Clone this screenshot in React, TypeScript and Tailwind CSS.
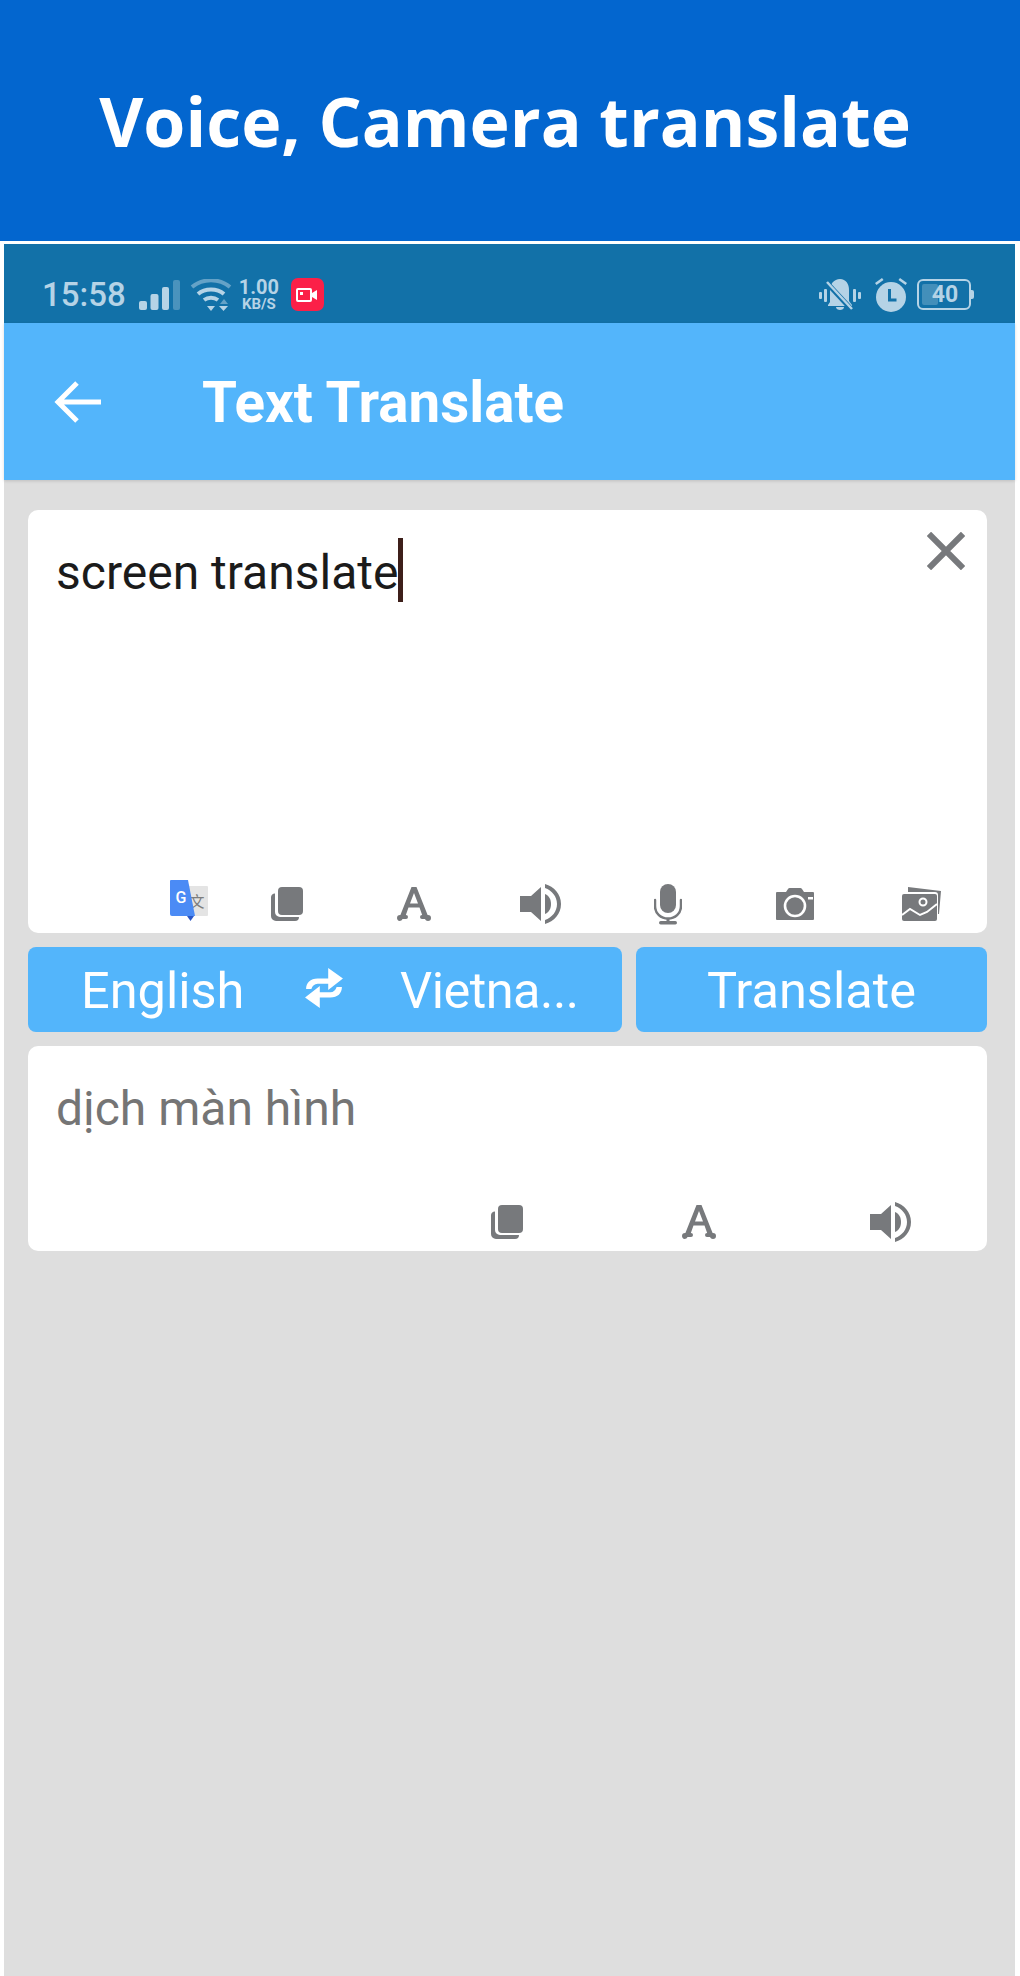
const roboto = { fontFamily: "Roboto, sans-serif" };

function CopyIcon() {
  return (
    <svg viewBox="0 0 32 34" className="w-[32px] h-[34px]" fill="#77797c">
      <path d="M11 0h17a4 4 0 0 1 4 4v20a4 4 0 0 1-4 4H11a4 4 0 0 1-4-4V4a4 4 0 0 1 4-4z" />
      <path d="M0 11a4 4 0 0 1 4-4.500V25a5 5 0 0 0 5 5h19a4 4 0 0 1-4 4H5a5 5 0 0 1-5-5z" />
    </svg>
  );
}

function FontIcon() {
  return (
    <svg viewBox="0 0 36 34" className="w-[36px] h-[34px]" fill="#77797c">
      <path d="M15.500 0h5L32 29h-5.500l-3-8.500h-11l-3 8.500H4zM14 16.500h8L18 6z" />
      <path d="M1 31a3 3 0 0 1 3-3h6a2 2 0 0 1 0 4H6.500C6 33 5 34 3.500 34 2 34 1 32.500 1 31z" />
      <path d="M26 28h6a3 3 0 0 1 0 6c-1.500 0-2.500-1-3-2h-3a2 2 0 0 1 0-4z" />
    </svg>
  );
}

function SpeakerIcon() {
  return (
    <svg viewBox="0 0 44 42" className="w-[44px] h-[42px]" fill="#77797c">
      <path d="M1 13h11L22 4v34L12 29H1z" />
      <path d="M26 11c4.500 2 6 6 6 10s-1.500 8-6 10z" />
      <path d="M26 1c9 2.500 16 10 16 20s-7 17.500-16 20v-4c7-2.500 12-8.500 12-16S33 7.500 26 5z" />
    </svg>
  );
}

function MicIcon() {
  return (
    <svg viewBox="0 0 28 42" className="w-[28px] h-[42px]" fill="#77797c">
      <rect x="6" y="1" width="16" height="29" rx="8" />
      <path d="M1 17v6c0 7.500 6 12.500 13 12.500S27 30.500 27 23v-6" fill="none" stroke="#77797c" strokeWidth="2.500" strokeLinecap="round" />
      <rect x="12.500" y="35" width="3" height="4" />
      <rect x="5" y="38" width="18" height="3.500" rx="1.700" />
    </svg>
  );
}

function CameraIcon() {
  return (
    <svg viewBox="0 0 40 34" className="w-[40px] h-[34px]">
      <path d="M1 6a1 1 0 0 1 1-1h9l2-3a2 2 0 0 1 2-1h10a2 2 0 0 1 2 1l2 3h9a1 1 0 0 1 1 1v26a1 1 0 0 1-1 1H2a1 1 0 0 1-1-1z" fill="#77797c" />
      <circle cx="20" cy="19" r="10" fill="none" stroke="#fff" strokeWidth="2.600" />
      <rect x="33" y="10" width="5" height="2.500" fill="#fff" />
    </svg>
  );
}

function GalleryIcon() {
  return (
    <svg viewBox="0 0 42 36" className="w-[42px] h-[36px]">
      <path d="M7 1l33 4-2 23-1 0V9a3 3 0 0 0-3-3H7z" fill="#77797c" />
      <rect x="1" y="8" width="35" height="27" rx="2" fill="#77797c" />
      <circle cx="22" cy="16" r="3.500" fill="none" stroke="#fff" strokeWidth="2" />
      <path d="M1 29l8-6 10 6 7-3 10-8" fill="none" stroke="#fff" strokeWidth="2" />
    </svg>
  );
}

function GoogleTranslateIcon() {
  return (
    <svg viewBox="0 0 40 42" className="w-[40px] h-[42px] mb-[8px]">
      <rect x="14" y="7" width="25" height="30" rx="1" fill="#e4e4e4" />
      <text x="28" y="28" fontSize="15" textAnchor="middle" fill="#7d7d7d" fontFamily="Noto Sans CJK SC, sans-serif">文</text>
      <path d="M2 1h17l7 36H3a2 2 0 0 1-2-2V2a1 1 0 0 1 1-1z" fill="#4b8bf5" />
      <path d="M18 37h7l-3.500 5z" fill="#2a56c6" />
      <text x="12" y="24" fontSize="16" fontWeight="500" textAnchor="middle" fill="#fff" fontFamily="Roboto, sans-serif">G</text>
    </svg>
  );
}

function SwapIcon() {
  return (
    <svg viewBox="2 0 36 38" className="w-[38px] h-[40px] mb-[4px]" fill="#fff">
      <path d="M24 0l14 10-14 11v-6H14c-3 0-5 2-6 5H3c0-6 4-10 11-10h10z" />
      <path d="M16 38L2 28l14-11v6h10c3 0 5-2 6-5h5c0 6-4 10-11 10H16z" />
    </svg>
  );
}

function StatusIcons() {
  const c = "#b5d3e6";
  return (
    <>
      <svg viewBox="0 0 42 32" className="w-[42px] h-[32px] ml-[12px]" fill={c}>
        <rect x="1" y="22" width="8" height="9" rx="2" />
        <rect x="12.500" y="15" width="8" height="16" rx="2" />
        <rect x="24" y="8" width="7" height="23" rx="2" />
        <rect x="35" y="1" width="7" height="30" rx="2" opacity="0.35" />
      </svg>
      <svg viewBox="0 0 42 32" className="w-[42px] h-[32px] ml-[10px]" fill="none">
        <path d="M2 8c11-9 27-9 38 0" stroke={c} strokeWidth="4" opacity="0.5" />
        <path d="M8 15c7-6 19-6 26 0" stroke={c} strokeWidth="4" />
        <path d="M14 21c4-3 10-3 14 0" stroke={c} strokeWidth="4" />
        <path d="M17 27h8l-4 5z" fill={c} />
        <path d="M30 25h8l-4-5z" fill={c} opacity="0.5" />
        <path d="M29 27h9l-4.500 5z" fill={c} />
      </svg>
      <div className="flex flex-col items-center ml-[7px] font-bold text-[#b5d3e6]">
        <span className="text-[20px] leading-[20px]">1.00</span>
        <span className="text-[15px] leading-[15px]">KB/S</span>
      </div>
      <div className="w-[33px] h-[33px] ml-[12px] rounded-[7px] bg-[#fb2048] flex items-center justify-center">
        <svg viewBox="0 0 22 14" className="w-[22px] h-[14px]" fill="none">
          <rect x="1" y="1" width="14" height="12" rx="1" stroke="#fff" strokeWidth="2" />
          <rect x="4" y="4" width="3" height="3" fill="#fff" />
          <path d="M16 5l5-3v10l-5-3z" fill="#fff" />
        </svg>
      </div>
    </>
  );
}

function RightStatus() {
  const c = "#b5d3e6";
  return (
    <div className="flex items-center ml-auto mr-[44px]">
      <svg viewBox="0 0 44 34" className="w-[44px] h-[34px]" fill={c}>
        <rect x="1" y="14" width="3" height="7" rx="1" />
        <rect x="6" y="11" width="3" height="13" rx="1" />
        <rect x="35" y="11" width="3" height="13" rx="1" />
        <rect x="40" y="14" width="3" height="7" rx="1" />
        <path d="M22 1c6 0 9 5 9 11v11l3 4v1H10v-1l2-3V12c0-6 4-11 10-11z" />
        <path d="M18 29h8c0 4-8 4-8 0z" />
        <path d="M9 5l25 27" stroke="#1271a8" strokeWidth="5" />
        <path d="M9 4l25 27" stroke={c} strokeWidth="2.500" />
      </svg>
      <svg viewBox="0 0 34 36" className="w-[34px] h-[36px] ml-[12px]" fill={c}>
        <path d="M1 6l7-5 1.500 2-7 5z" />
        <path d="M33 6l-7-5-1.500 2 7 5z" />
        <circle cx="17" cy="20" r="15" />
        <path d="M15.500 12v11h7" stroke="#1271a8" strokeWidth="3" fill="none" />
      </svg>
      <div className="relative w-[54px] h-[31px] ml-[9px] rounded-[6px] border-[2px] border-[#b5d3e6] flex items-center justify-center">
        <div className="absolute left-[3px] top-[3px] bottom-[3px] w-[16px] rounded-[2px] bg-[#b5d3e6] opacity-30" />
        <span className="relative ml-[2px] text-[23px] leading-none font-bold text-[#b5d3e6]">40</span>
        <div className="absolute right-[-5px] top-[9px] w-[3px] h-[9px] rounded-r-[2px] bg-[#b5d3e6]" />
      </div>
    </div>
  );
}

export default function App() {
  return (
    <div className="w-[1020px] h-[1976px] bg-white flex flex-col overflow-hidden" style={roboto}>
      {/* Promo banner */}
      <div className="h-[241px] shrink-0 bg-[#0366cf] flex items-center justify-center">
        <h1 className="text-[68px] leading-none font-bold text-white mr-[10px]" style={{ fontFamily: '"Open Sans", sans-serif' }}>
          Voice, Camera translate
        </h1>
      </div>

      <div className="flex-1 mt-[3px] ml-[4px] mr-[5px] bg-[#dedede] flex flex-col">
        {/* Status bar */}
        <div className="h-[79px] bg-[#1271a8] flex items-center pl-[38px] pt-[22px] text-[#b5d3e6]">
          <span className="text-[33px] leading-none font-medium">15:58</span>
          <StatusIcons />
          <RightStatus />
        </div>

        {/* App bar */}
        <div className="h-[157px] bg-[#53b5fb] flex items-center pl-[50px] shadow-[0_1px_3px_rgba(0,0,0,0.15)]">
          <svg viewBox="0 0 48 44" className="w-[48px] h-[44px]" fill="none" stroke="#fff" strokeWidth="5">
            <path d="M47 22H4M23 3L4 22l19 19" />
          </svg>
          <span className="ml-[100px] pt-[4px] text-[56.5px] leading-none font-bold text-white">Text Translate</span>
        </div>

        <div className="flex flex-col gap-[14px] pl-[24px] pr-[28px] pt-[30px]">
          {/* Source card */}
          <div className="relative h-[423px] bg-white rounded-[10px] flex flex-col">
            <div className="pl-[28px] pt-[28px] flex items-start">
              <span className="pt-[3px] text-[48px] leading-[64px] text-[#1b1b1b]">screen translate</span>
              <div className="w-[5px] h-[64px] bg-[#3d1f1a]" />
            </div>
            <svg viewBox="0 0 40 40" className="absolute right-[22px] top-[22px] w-[38px] h-[38px]" fill="none" stroke="#77797c" strokeWidth="6.500">
              <path d="M2 2l36 36M38 2L2 38" />
            </svg>
            <div className="mt-auto pb-[7px] pr-[2px] h-[51px] flex justify-end">
              <div className="w-[69px] flex justify-center items-center"><GoogleTranslateIcon /></div>
              <div className="w-[127px] flex justify-center items-center"><CopyIcon /></div>
              <div className="w-[127px] flex justify-center items-center"><FontIcon /></div>
              <div className="w-[127px] flex justify-center items-center"><SpeakerIcon /></div>
              <div className="w-[127px] flex justify-center items-center"><MicIcon /></div>
              <div className="w-[127px] flex justify-center items-center"><CameraIcon /></div>
              <div className="w-[127px] flex justify-center items-center"><GalleryIcon /></div>
            </div>
          </div>

          {/* Language row */}
          <div className="flex gap-[14px] h-[85px]">
            <div className="w-[594px] rounded-[8px] bg-[#53b5fb] flex items-center text-[50.5px] text-white">
              <span className="pt-[3px] ml-[53px] w-[224px] shrink-0">English</span>
              <SwapIcon />
              <span className="pt-[3px] ml-[57px] tracking-[-0.5px]">Vietna...</span>
            </div>
            <div className="flex-1 rounded-[8px] bg-[#53b5fb] flex items-center justify-center pt-[3px] text-[50.5px] text-white">
              Translate
            </div>
          </div>

          {/* Result card */}
          <div className="h-[205px] bg-white rounded-[10px] flex flex-col">
            <div className="pl-[28px] pt-[31px] text-[48px] leading-[64px] text-[#757575]">dịch màn hình</div>
            <div className="mt-auto pb-[6px] h-[52px] flex justify-end">
              <div className="w-[192px] flex justify-center items-center"><CopyIcon /></div>
              <div className="w-[192px] flex justify-center items-center"><FontIcon /></div>
              <div className="w-[192px] flex justify-center items-center"><SpeakerIcon /></div>
            </div>
          </div>
        </div>
      </div>
    </div>
  );
}
